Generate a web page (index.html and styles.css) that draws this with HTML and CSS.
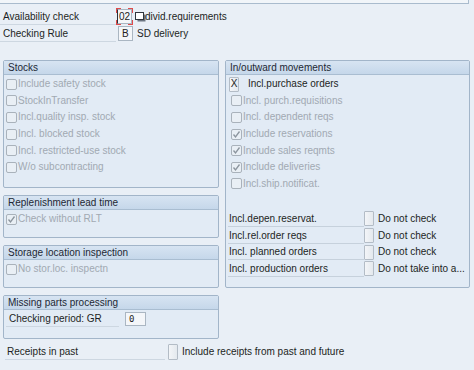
FILE: index.html
```html
<!DOCTYPE html>
<html>
<head>
<meta charset="utf-8">
<link rel="stylesheet" href="styles.css">
</head>
<body>
<div class="topbar"></div>
<div class="head">
  <div class="frow">
    <span class="lbl">Availability check</span>
    <span class="focus"><span class="inp">02</span></span>
    <svg class="f4" width="12" height="10" viewBox="0 0 12 10"><rect x="2.5" y="2.5" width="8" height="7" fill="#6b7480"/><rect x="0.5" y="0.5" width="8" height="7" fill="#fff" stroke="#30363d"/></svg>
    <span class="val v1">divid.requirements</span>
  </div>
  <div class="frow">
    <span class="lbl">Checking Rule</span>
    <span class="inp plain">B</span>
    <span class="val v2">SD delivery</span>
  </div>
</div>
<div class="cols">
  <div class="lcol">
    <section class="grp stocks">
      <div class="grp-h">Stocks</div>
      <div class="grp-b">
        <div class="cb-row"><span class="cb"></span>Include safety stock</div>
        <div class="cb-row"><span class="cb"></span>StockInTransfer</div>
        <div class="cb-row"><span class="cb"></span>Incl.quality insp. stock</div>
        <div class="cb-row"><span class="cb"></span>Incl. blocked stock</div>
        <div class="cb-row"><span class="cb"></span>Incl. restricted-use stock</div>
        <div class="cb-row"><span class="cb"></span>W/o subcontracting</div>
      </div>
    </section>
    <section class="grp small">
      <div class="grp-h">Replenishment lead time</div>
      <div class="grp-b">
        <div class="cb-row"><span class="cb"><svg width="9" height="9" viewBox="0 0 9 9"><polyline points="1.5,4.5 3.5,7 7.5,1.5" fill="none" stroke="#8c959e" stroke-width="1.3"/></svg></span>Check without RLT</div>
      </div>
    </section>
    <section class="grp small">
      <div class="grp-h">Storage location inspection</div>
      <div class="grp-b">
        <div class="cb-row"><span class="cb"></span>No stor.loc. inspectn</div>
      </div>
    </section>
    <section class="grp small2">
      <div class="grp-h">Missing parts processing</div>
      <div class="grp-b">
        <div class="frow fr-in">
          <span class="lbl lbl2">Checking period: GR</span>
          <span class="inp num">0</span>
        </div>
      </div>
    </section>
  </div>
  <div class="rcol">
    <section class="grp inout">
      <div class="grp-h">In/outward movements</div>
      <div class="grp-b rb">
        <div class="cb-row xrow"><span class="tall">X</span>Incl.purchase orders</div>
        <div class="cb-row rr"><span class="cb"></span>Incl. purch.requisitions</div>
        <div class="cb-row rr"><span class="cb"></span>Incl. dependent reqs</div>
        <div class="cb-row rr"><span class="cb"><svg width="9" height="9" viewBox="0 0 9 9"><polyline points="1.5,4.5 3.5,7 7.5,1.5" fill="none" stroke="#8c959e" stroke-width="1.3"/></svg></span>Include reservations</div>
        <div class="cb-row rr"><span class="cb"><svg width="9" height="9" viewBox="0 0 9 9"><polyline points="1.5,4.5 3.5,7 7.5,1.5" fill="none" stroke="#8c959e" stroke-width="1.3"/></svg></span>Include sales reqmts</div>
        <div class="cb-row rr"><span class="cb"><svg width="9" height="9" viewBox="0 0 9 9"><polyline points="1.5,4.5 3.5,7 7.5,1.5" fill="none" stroke="#8c959e" stroke-width="1.3"/></svg></span>Include deliveries</div>
        <div class="cb-row rr"><span class="cb"></span>Incl.ship.notificat.</div>
        <div class="tbl">
          <div class="trow"><span class="tlbl">Incl.depen.reservat.</span><span class="tall"></span><span class="tval">Do not check</span></div>
          <div class="trow"><span class="tlbl">Incl.rel.order reqs</span><span class="tall"></span><span class="tval">Do not check</span></div>
          <div class="trow"><span class="tlbl">Incl. planned orders</span><span class="tall"></span><span class="tval">Do not check</span></div>
          <div class="trow"><span class="tlbl">Incl. production orders</span><span class="tall"></span><span class="tval">Do not take into a...</span></div>
        </div>
      </div>
    </section>
  </div>
</div>
<div class="receipts">
  <span class="lbl lbl3">Receipts in past</span>
  <span class="tall rtall"></span>
  <span class="tval">Include receipts from past and future</span>
</div>
</body>
</html>
```
FILE: styles.css
```css
* { box-sizing: border-box; }
body {
  margin: 0;
  width: 474px;
  height: 370px;
  overflow: hidden;
  background: #e9eff6;
  font: 10px/1 "Liberation Sans", Arial, sans-serif;
  color: #1c1f23;
}
.topbar {
  height: 4px;
  width: 469px;
  background: #f1f5f9;
  border-bottom: 1px solid #a9bbcd;
  border-right: 1px solid #a9bbcd;
}
.head {
  padding-top: 4px;
  display: flex;
  flex-direction: column;
}
.frow {
  display: flex;
  align-items: center;
  height: 17px;
}
.lbl {
  width: 116px;
  height: 16px;
  line-height: 16px;
  padding-left: 3px;
  border-bottom: 1px solid #cdd7e1;
  flex: none;
}
.focus {
  width: 17px;
  height: 17px;
  padding: 1px;
  display: flex;
  background:
    linear-gradient(#e04a4a, #e04a4a) left top / 5px 2px no-repeat,
    linear-gradient(#e04a4a, #e04a4a) left top / 2px 5px no-repeat,
    linear-gradient(#e04a4a, #e04a4a) right top / 5px 2px no-repeat,
    linear-gradient(#e04a4a, #e04a4a) right top / 2px 5px no-repeat,
    linear-gradient(#e04a4a, #e04a4a) left bottom / 5px 2px no-repeat,
    linear-gradient(#e04a4a, #e04a4a) left bottom / 2px 5px no-repeat,
    linear-gradient(#e04a4a, #e04a4a) right bottom / 5px 2px no-repeat,
    linear-gradient(#e04a4a, #e04a4a) right bottom / 2px 5px no-repeat;
}
.inp {
  width: 15px;
  height: 15px;
  line-height: 13px;
  padding-left: 1px;
  background: #f4f6f9;
  border: 1px solid #aab6c2;
  border-left-color: #2a2f35;
  font-size: 10px;
  color: #222;
  flex: none;
}
.inp.plain {
  margin-left: 2px;
  padding-left: 3px;
  border-left-color: #aab6c2;
}
.f4 { margin-left: 2px; flex: none; }
.v1 { margin-left: -2px; }
.v2 { margin-left: 4px; }

.cols {
  display: flex;
  margin: 18px 0 0 3px;
  gap: 6px;
}
.lcol {
  width: 216px;
  display: flex;
  flex-direction: column;
  gap: 7px;
}
.rcol { width: 245px; }
.grp {
  border: 1px solid #a2b5c9;
  border-radius: 2px;
  background: #e2ebf5;
}
.stocks { height: 128px; }
.small { height: 43px; }
.small2 { height: 44px; }
.inout { height: 228px; }
.grp-h {
  height: 14px;
  line-height: 13px;
  padding-left: 4px;
  background: linear-gradient(#d7e4f2, #c5d7ea);
  border-bottom: 1px solid #a9bdd1;
  color: #1d2834;
}
.grp-b { padding: 1px 0 0 2px; }
.cb-row {
  display: flex;
  align-items: center;
  height: 16.6px;
  gap: 1px;
  color: #a1a9b2;
}
.cb {
  width: 11px;
  height: 11px;
  border: 1px solid #a9b2bb;
  border-radius: 2px;
  background: #e9eff5;
  display: flex;
  align-items: center;
  justify-content: center;
  flex: none;
}
.rb { padding-left: 0; }
.rr { padding-left: 5px; }
.xrow {
  padding-left: 3px;
  color: #1c1f23;
}
.tall {
  width: 10px;
  height: 15px;
  border: 1px solid #b3bcc6;
  border-radius: 1px;
  background: linear-gradient(90deg, #f3f5f8, #e4e9ee);
  flex: none;
  display: flex;
  align-items: center;
  justify-content: center;
  font-size: 10px;
  color: #1c1f23;
}
.xrow .tall { margin-right: 8px; }
.tbl {
  margin-top: 18.5px;
  display: flex;
  flex-direction: column;
}
.trow {
  display: flex;
  align-items: center;
  height: 16.6px;
  padding-left: 2px;
}
.tlbl {
  width: 136px;
  height: 16px;
  line-height: 16px;
  padding-left: 1px;
  border-bottom: 1px solid #c6d1dc;
  flex: none;
}
.tval { margin-left: 4px; }
.fr-in { height: 16.6px; }
.lbl2 {
  width: 113px;
  margin-left: 0;
  padding-left: 3px;
}
.num {
  width: 21px;
  height: 14px;
  margin-left: 6px;
  padding-left: 3px;
  border-left-color: #aab6c2;
  font-family: "DejaVu Sans Mono", monospace;
  font-size: 9px;
  line-height: 12px;
}
.receipts {
  display: flex;
  align-items: center;
  height: 16px;
  margin: 5px 0 0 5px;
}
.lbl3 {
  width: 160px;
  padding-left: 2px;
}
.rtall {
  height: 16px;
  margin-left: 3px;
}
```
